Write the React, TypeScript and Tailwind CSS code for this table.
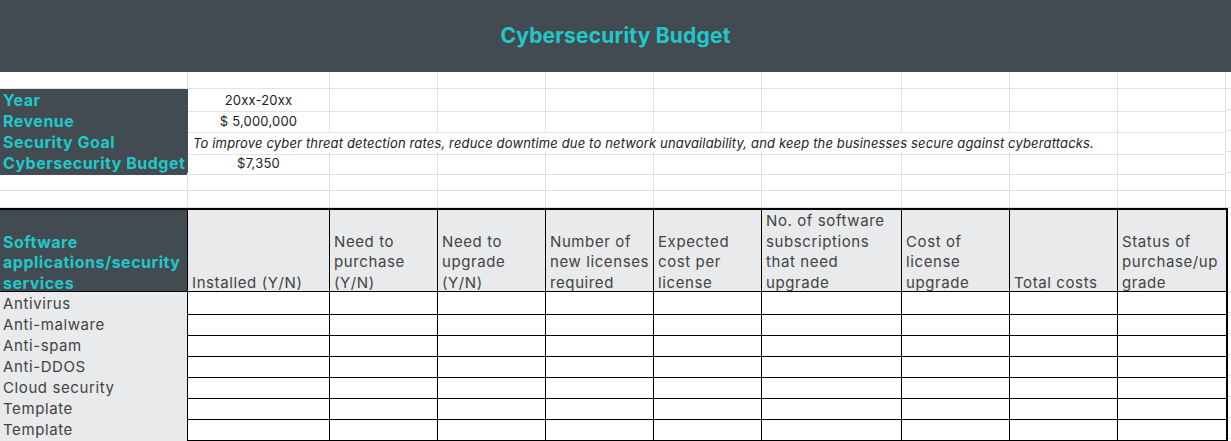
import React from 'react';

const cols = 'grid grid-cols-[188px_142px_108px_108px_108px_108px_140px_108px_108px_108px]';
const widths = [188, 142, 108, 108, 108, 108, 140, 108, 108, 108];

const headers = [
  'Installed (Y/N)',
  'Need to purchase (Y/N)',
  'Need to upgrade (Y/N)',
  'Number of new licenses required',
  'Expected cost per license',
  'No. of software subscriptions that need upgrade',
  'Cost of license upgrade',
  'Total costs',
  'Status of purchase/up grade',
];

// last row is only a sliver at the bottom edge
const items = ['Antivirus', 'Anti-malware', 'Anti-spam', 'Anti-DDOS', 'Cloud security', 'Template', 'Template', ''];

const info = [
  { label: 'Year', value: '20xx-20xx' },
  { label: 'Revenue', value: '$ 5,000,000' },
  { label: 'Security Goal', value: '' },
  { label: 'Cybersecurity Budget', value: '$7,350' },
];

function BlankRow({ h }: { h: string }) {
  return (
    <div className="flex">
      <div className={`${cols} ${h}`}>
        {widths.map((_, i) => (
          <div key={i} className="border-r border-b border-[#e2e2e2]" />
        ))}
      </div>
      <div className={`flex-1 border-b border-[#e2e2e2] ${h}`} />
    </div>
  );
}

export default function App() {
  return (
    <div className="w-[1231px] h-[441px] overflow-hidden bg-white font-['Inter',sans-serif] text-[#3a3a3a]">
      {/* Title */}
      <div className="h-[72px] bg-[#434b52] flex items-center justify-center">
        <h1 className="text-[21px] font-bold text-[#1fc9c9] tracking-[0.2px]">Cybersecurity Budget</h1>
      </div>

      {/* Info block */}
      <BlankRow h="h-[17px]" />
      {info.map((row) => (
        <div key={row.label} className="flex">
          <div className={`${cols} h-[21px]`}>
            <div className="bg-[#434b52] pl-[3px] pt-[1px] text-[16px] leading-[21px] font-bold tracking-[0.5px] text-[#1fc9c9] whitespace-nowrap">
              {row.label}
            </div>
            {row.label === 'Security Goal' ? (
              <>
                <div className="col-span-8 border-r border-b border-[#e2e2e2] pl-[5px] pt-[2px] text-[13px] leading-[21px] tracking-[0.15px] italic text-[#222] whitespace-nowrap">
                  To improve cyber threat detection rates, reduce downtime due to network unavailability, and keep the businesses secure against cyberattacks.
                </div>
                <div className="border-r border-b border-[#e2e2e2]" />
              </>
            ) : (
              <>
                <div className="border-r border-b border-[#e2e2e2] pt-[1px] text-center text-[13px] leading-[21px] tracking-[0.2px] text-[#222]">
                  {row.value}
                </div>
                {widths.slice(2).map((_, i) => (
                  <div key={i} className="border-r border-b border-[#e2e2e2]" />
                ))}
              </>
            )}
          </div>
          <div className="flex-1 border-b border-[#e2e2e2]" />
        </div>
      ))}
      <BlankRow h="h-[18px]" />
      <BlankRow h="h-[17px]" />

      {/* Table */}
      <div className="flex">
        <div className="w-[1228px] border-t-2 border-r-2 border-black">
          <div className={`${cols} h-[82px]`}>
            <div className="bg-[#434b52] border-r border-b border-black pl-[3px] flex flex-col justify-end text-[16px] leading-[20.5px] font-bold tracking-[0.5px] text-[#1fc9c9]">
              <div className="mb-[-2px] flex flex-col">
                <span>Software</span>
                <span>applications/security</span>
                <span>services</span>
              </div>
            </div>
            {headers.map((h, i) => (
              <div
                key={i}
                className={`bg-[#e8eaeb] border-b border-black pl-[4px] pr-[1px] flex flex-col justify-end text-[15px] leading-[20.5px] tracking-[0.6px] text-[#434343] ${i < headers.length - 1 ? 'border-r' : ''}`}
              >
                <span className="mb-[-2px]">{h}</span>
              </div>
            ))}
          </div>
          {items.map((name, r) => (
            <div key={r} className={`${cols} h-[21px]`}>
              <div className="bg-[#e8eaeb] border-r border-b border-black pl-[3px] pt-[2px] text-[15px] leading-[20px] tracking-[0.6px] text-[#434343] whitespace-nowrap">
                {name}
              </div>
              {headers.map((_, i) => (
                <div key={i} className={`border-b border-black ${i < headers.length - 1 ? 'border-r' : ''}`} />
              ))}
            </div>
          ))}
        </div>
        <div className="flex-1 flex flex-col">
          <div className="h-[84px] border-b border-[#e2e2e2]" />
          {items.map((_, r) => (
            <div key={r} className="h-[21px] border-b border-[#e2e2e2]" />
          ))}
        </div>
      </div>
    </div>
  );
}
